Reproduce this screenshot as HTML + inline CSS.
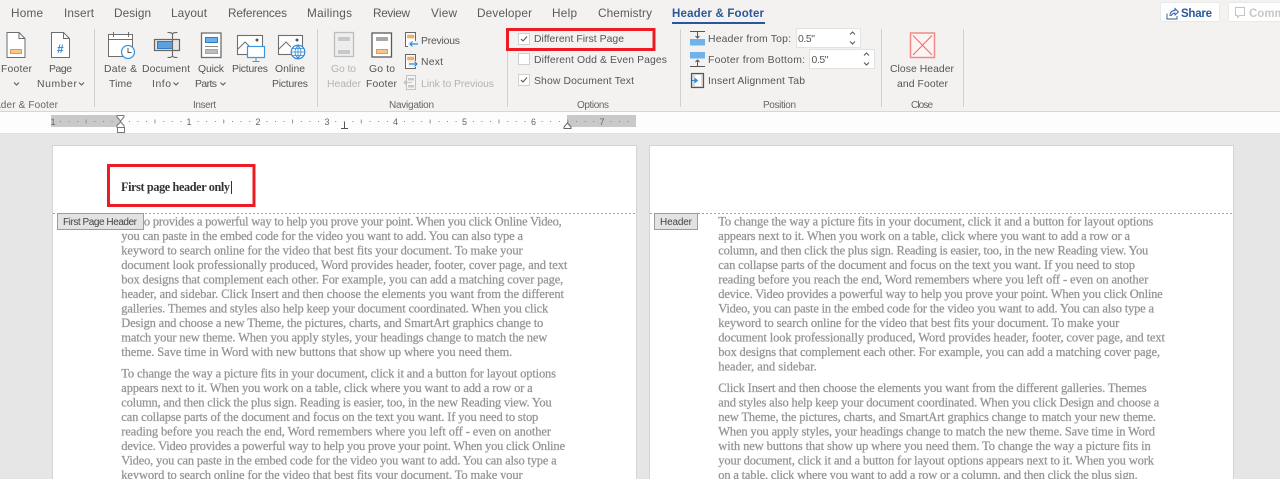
<!DOCTYPE html>
<html><head><meta charset="utf-8"><title>Word Header &amp; Footer</title>
<style>
html,body{margin:0;padding:0;background:#e6e6e6;overflow:hidden}
svg{display:block;position:absolute;left:0;top:0;filter:blur(.3px)}
text{font-family:"Liberation Sans",sans-serif;font-size:10.4px;fill:#555}
.t{font-size:11.8px;fill:#5a5a5a}
.g{fill:#b3b3b3}
.gl{fill:#666;font-size:10px}
.b{font-family:"Liberation Serif",serif;font-size:12.5px;fill:#949494;stroke:#949494;stroke-width:.25px}
.r{font-size:9px;fill:#666}
</style></head>
<body>
<svg width="1280" height="479" viewBox="0 0 1280 479" xmlns="http://www.w3.org/2000/svg">
<!-- backgrounds -->
<rect width="1280" height="479" fill="#e6e6e6"/>
<rect width="1280" height="111" fill="#f3f2f1"/>
<rect y="111" width="1280" height="1" fill="#d6d6d6"/>
<rect y="112" width="1280" height="21" fill="#fdfdfd"/>
<rect y="133" width="1280" height="1" fill="#e0e0e0"/>

<!-- tabs -->
<text class="t" x="11" y="17" textLength="32">Home</text>
<text class="t" x="64" y="17" textLength="30">Insert</text>
<text class="t" x="114" y="17" textLength="37">Design</text>
<text class="t" x="171" y="17" textLength="36">Layout</text>
<text class="t" x="228" y="17" textLength="59">References</text>
<text class="t" x="307" y="17" textLength="45">Mailings</text>
<text class="t" x="373" y="17" textLength="37">Review</text>
<text class="t" x="431" y="17" textLength="26">View</text>
<text class="t" x="477" y="17" textLength="55">Developer</text>
<text class="t" x="552" y="17" textLength="25">Help</text>
<text class="t" x="598" y="17" textLength="54">Chemistry</text>
<text class="t" x="672" y="17" textLength="92" style="fill:#2b579a;font-weight:bold;font-size:11.5px">Header &amp; Footer</text>
<rect x="672" y="22" width="93" height="2" fill="#2b579a"/>

<!-- share / comments -->
<rect x="1160.500" y="2.500" width="59" height="19" rx="2" fill="#fff" stroke="#e9e9e9"/>
<path d="M1167 13.500v5.500h10v-3M1170 16c0-4 2-5.500 5-5.500V8.500l3.500 3.500-3.500 3v-2c-2 0-3 1-4 3" fill="none" stroke="#2b579a" stroke-width=".9"/>
<text x="1181" y="17" textLength="31" style="font-size:11.5px;font-weight:bold;fill:#2b579a">Share</text>
<rect x="1228.500" y="2.500" width="60" height="19" rx="2" fill="#fff" stroke="#e9e9e9"/>
<path d="M1235.500 7.500h9v8h-5l-2 2v-2h-2z" fill="none" stroke="#c4c4c4"/>
<text x="1249" y="17" style="font-size:11.5px;font-weight:bold;fill:#c8c8c8">Comments</text>

<!-- separators -->
<g stroke="#d2d0ce">
<path d="M94.500 29v78M317.500 29v78M507.500 29v78M680.500 29v78M881.500 29v78M963.500 29v78"/>
</g>

<!-- Footer icon -->
<path d="M7 32.500h12l6 6v19H7z" fill="#fff" stroke="#6e6e6e"/>
<path d="M19 32.500v6h6" fill="none" stroke="#6e6e6e"/>
<rect x="10.500" y="49.500" width="11" height="4" fill="#f7c68c" stroke="#ea9a3c"/>
<text x="1" y="72" textLength="31">Footer</text>
<path d="M14 82.500l2.500 2.500 2.500-2.500" fill="none" stroke="#555"/>

<!-- Page Number icon -->
<path d="M51.500 32.500h12l6 6v19h-18z" fill="#fff" stroke="#6e6e6e"/>
<path d="M63.500 32.500v6h6" fill="none" stroke="#6e6e6e"/>
<text x="57" y="53" style="font-size:12px;font-weight:bold;fill:#2f86d6">#</text>
<text x="49" y="72" textLength="23">Page</text>
<text x="37" y="87" textLength="40">Number</text>
<path d="M79 82.500l2.500 2.500 2.500-2.500" fill="none" stroke="#555"/>

<text class="gl" x="-18" y="108" textLength="76">Header &amp; Footer</text>

<!-- Date & Time -->
<rect x="108.500" y="34.500" width="24" height="22" fill="#fff" stroke="#6e6e6e"/>
<path d="M108.500 39.500h24M113.500 32v5M128.500 32v5" fill="none" stroke="#6e6e6e"/>
<circle cx="128" cy="52" r="6.500" fill="#fff" stroke="#3d97e0" stroke-width="1.300"/>
<path d="M128 48v4.500h3.500" fill="none" stroke="#555"/>
<text x="104" y="72" textLength="33">Date &amp;</text>
<text x="109" y="87" textLength="23">Time</text>

<!-- Document Info -->
<rect x="154.500" y="39.500" width="25" height="11" fill="#e4e4e4" stroke="#666" stroke-width="1.200"/>
<rect x="157.500" y="41.500" width="15" height="7" fill="#5da0de" stroke="#2d7cc6"/>
<path d="M172.500 33v24M167.500 32.500c3 0 4 0 5 1.500 1-1.500 2-1.500 5-1.500M167.500 57.500c3 0 4 0 5-1.500 1 1.500 2 1.500 5 1.500" fill="none" stroke="#666" stroke-width="1.100"/>
<text x="142" y="72" textLength="48">Document</text>
<text x="152" y="87" textLength="19">Info</text>
<path d="M173.500 82.500l2.500 2.500 2.500-2.500" fill="none" stroke="#555"/>

<!-- Quick Parts -->
<rect x="201.500" y="33" width="19.500" height="24.500" fill="#fff" stroke="#6e6e6e" stroke-width="1.300"/>
<rect x="205.500" y="37.500" width="12" height="5" fill="#6ab0ee" stroke="#2d7cc6"/>
<path d="M205 46.500h13" stroke="#888"/>
<rect x="205.500" y="49.500" width="12" height="4" fill="#bcbcbc" stroke="#a8a8a8"/>
<text x="198" y="72" textLength="26">Quick</text>
<text x="195" y="87" textLength="22">Parts</text>
<path d="M220.500 82.500l2.500 2.500 2.500-2.500" fill="none" stroke="#555"/>

<!-- Pictures -->
<rect x="237.500" y="35.500" width="25" height="19" fill="#fff" stroke="#6e6e6e" stroke-width="1.100"/>
<path d="M238 49l7-7 5 5" fill="none" stroke="#6e6e6e"/>
<circle cx="257" cy="40" r="1.500" fill="#555"/>
<rect x="247.500" y="46.500" width="17" height="11" fill="#fff" stroke="#3d97e0" stroke-width="1.200"/>
<path d="M256 58v3M252.500 61.500h7" stroke="#3d97e0"/>
<text x="232" y="72" textLength="36">Pictures</text>

<!-- Online Pictures -->
<rect x="278.500" y="35.500" width="24" height="19" fill="#fff" stroke="#6e6e6e" stroke-width="1.100"/>
<path d="M279 49l7-7 5 5" fill="none" stroke="#6e6e6e"/>
<circle cx="297" cy="40" r="1.500" fill="#555"/>
<circle cx="298" cy="52" r="6.800" fill="#fff" stroke="#2d86d6" stroke-width="1.200"/>
<path d="M291.500 52h13M292.500 48.500h11M292.500 55.500h11M298 45.500v13M298 45.500c-4 4-4 9 0 13M298 45.500c4 4 4 9 0 13" fill="none" stroke="#2d86d6" stroke-width=".8"/>
<text x="275" y="72" textLength="30">Online</text>
<text x="272" y="87" textLength="36">Pictures</text>
<text class="gl" x="193" y="108" textLength="23">Insert</text>

<!-- Go to Header -->
<rect x="334.500" y="32.500" width="19" height="24" fill="#ededed" stroke="#bdbdbd" stroke-width="1.300"/>
<rect x="338" y="37" width="12" height="4" fill="#c8c8c8"/>
<rect x="338" y="50" width="12" height="4" fill="#c8c8c8"/>
<text class="g" x="331" y="72" textLength="25">Go to</text>
<text class="g" x="327" y="87" textLength="34">Header</text>

<!-- Go to Footer -->
<rect x="372" y="33" width="19.500" height="24" fill="#fff" stroke="#5a5a5a" stroke-width="1.300"/>
<rect x="376" y="37" width="12" height="4" fill="#a8a8a8"/>
<rect x="376.500" y="49.500" width="11" height="4" fill="#f7c68c" stroke="#ea9a3c"/>
<text x="369" y="72" textLength="26">Go to</text>
<text x="366" y="87" textLength="31">Footer</text>

<!-- Previous -->
<rect x="405.500" y="32.500" width="10" height="14" fill="#fff" stroke="#666"/>
<rect x="407.500" y="35" width="6.500" height="3" fill="#f5b26b" stroke="#ea9a3c" stroke-width=".5"/>
<rect x="408" y="41" width="10" height="6" fill="#f3f2f1"/>
<path d="M418 44h-8M412.500 41.500L410 44l2.500 2.500" fill="none" stroke="#2d8ddd" stroke-width="1.200"/>
<!-- Next -->
<rect x="405.500" y="54.500" width="10" height="14" fill="#fff" stroke="#666"/>
<rect x="407.500" y="57" width="6.500" height="3" fill="#f5b26b" stroke="#ea9a3c" stroke-width=".5"/>
<rect x="408" y="61" width="10" height="6" fill="#f3f2f1"/>
<path d="M409 64h8M414.500 61.500L417 64l-2.500 2.500" fill="none" stroke="#2d8ddd" stroke-width="1.200"/>
<!-- Link -->
<rect x="406.500" y="75.500" width="9" height="14" fill="#f5f5f5" stroke="#c2c2c2"/>
<rect x="408" y="78" width="6" height="2.500" fill="#c8c8c8"/>
<rect x="408" y="85" width="6" height="2.500" fill="#c8c8c8"/>
<path d="M412 82.500h-8M406.500 80L404 82.500l2.500 2.500" fill="none" stroke="#c2c2c2"/>
<text x="421" y="44" textLength="39">Previous</text>
<text x="421" y="65" textLength="22">Next</text>
<text class="g" x="421" y="87" textLength="73">Link to Previous</text>
<text class="gl" x="389" y="108" textLength="45">Navigation</text>

<!-- Options -->
<rect x="518.500" y="33.500" width="11" height="11" fill="#fff" stroke="#d0d0d0"/>
<path d="M521 39l2 2 4-4.500" fill="none" stroke="#555" stroke-width="1.100"/>
<rect x="518.500" y="53.500" width="11" height="11" fill="#fff" stroke="#d0d0d0"/>
<rect x="518.500" y="74.500" width="11" height="11" fill="#fff" stroke="#d0d0d0"/>
<path d="M521 80l2 2 4-4.500" fill="none" stroke="#555" stroke-width="1.100"/>
<text x="534" y="42" textLength="90">Different First Page</text>
<text x="534" y="63" textLength="133">Different Odd &amp; Even Pages</text>
<text x="534" y="84" textLength="100">Show Document Text</text>
<text class="gl" x="577" y="108" textLength="32">Options</text>
<rect x="507.500" y="29.500" width="146.500" height="20" fill="none" stroke="#ed1c24" stroke-width="3"/>

<!-- Position -->
<path d="M690 31.500h15M697.500 32v6M695.500 36l2 2 2-2" fill="none" stroke="#555"/>
<rect x="690" y="39" width="15" height="6.500" fill="#6fb3ea"/>
<rect x="690" y="52" width="15" height="6.500" fill="#6fb3ea"/>
<path d="M690 66.500h15M697.500 60v6M695.500 62l2-2 2 2" fill="none" stroke="#555"/>
<rect x="691.500" y="73.500" width="12" height="14" fill="#dcdcdc" stroke="#555" stroke-width="1.200"/>
<rect x="695" y="75" width="6" height="11" fill="#fff"/>
<path d="M692 80.500h5M695 78.500l2.500 2-2.500 2z" fill="#2d8ddd" stroke="#2d8ddd"/>
<text x="708" y="42" textLength="83">Header from Top:</text>
<text x="708" y="63" textLength="97">Footer from Bottom:</text>
<text x="708" y="84" textLength="97">Insert Alignment Tab</text>
<rect x="796.500" y="28.500" width="64" height="19" fill="#fff" stroke="#e2e2e2"/>
<rect x="809.500" y="49.500" width="65" height="19" fill="#fff" stroke="#e2e2e2"/>
<text x="798" y="42" textLength="17">0.5"</text>
<text x="811.500" y="63" textLength="17">0.5"</text>
<path d="M850 34.500l2.500-2.500 2.500 2.500M850 41.500l2.500 2.500 2.500-2.500M864 55.500l2.500-2.500 2.500 2.500M864 62.500l2.500 2.500 2.500-2.500" fill="none" stroke="#555"/>
<text class="gl" x="763" y="108" textLength="33">Position</text>

<!-- Close -->
<rect x="910.500" y="33" width="24" height="24.500" fill="#fdf3f3" stroke="#f08a8a" stroke-width="1.500"/>
<path d="M913 35.500l19 19.500M932 35.500l-19 19.500" stroke="#ee6a6a" stroke-width="1"/>
<text x="890" y="72" textLength="64">Close Header</text>
<text x="897" y="87" textLength="51">and Footer</text>
<text class="gl" x="911" y="108" textLength="22">Close</text>

<!-- ruler -->
<rect x="51" y="115" width="69" height="12" fill="#c9c9c9"/>
<rect x="567" y="115" width="69" height="12" fill="#c9c9c9"/>
<path d="M60 121.500H636" stroke="#888" stroke-dasharray="1 7.600"/>
<path d="M85.600 121.500H636" stroke="#999" stroke-width="4" stroke-dasharray="1 67.800"/>
<rect x="185" y="115" width="8" height="12" fill="#fdfdfd"/>
<rect x="254" y="115" width="8" height="12" fill="#fdfdfd"/>
<rect x="323" y="115" width="8" height="12" fill="#fdfdfd"/>
<rect x="392" y="115" width="8" height="12" fill="#fdfdfd"/>
<rect x="461" y="115" width="8" height="12" fill="#fdfdfd"/>
<rect x="529" y="115" width="8" height="12" fill="#fdfdfd"/>
<rect x="598" y="115" width="8" height="12" fill="#c9c9c9"/>
<text class="r" x="50.500" y="125">1</text>
<text class="r" x="186.500" y="125">1</text>
<text class="r" x="255.500" y="125">2</text>
<text class="r" x="324.500" y="125">3</text>
<text class="r" x="393" y="125">4</text>
<text class="r" x="462" y="125">5</text>
<text class="r" x="531" y="125">6</text>
<text class="r" x="599.500" y="125">7</text>
<path d="M117 115.500h7v1.500l-3.500 4-3.500-4z" fill="#fff" stroke="#777"/>
<path d="M120.500 122l3.500 3.500v2h-7v-2z" fill="#fff" stroke="#777"/>
<rect x="117.500" y="127.500" width="7" height="5" fill="#fff" stroke="#777"/>
<path d="M344.500 122v6M341 128.500h7" stroke="#555" fill="none"/>
<path d="M567.500 123l3.500 4v1.500h-7V127z" fill="#fff" stroke="#666"/>

<!-- pages -->
<rect x="52.500" y="145.500" width="584" height="340" fill="#fff" stroke="#d4d4d4"/>
<rect x="649.500" y="145.500" width="584" height="340" fill="#fff" stroke="#d4d4d4"/>
<path d="M53 213.500H636M650 213.500H1233" stroke="#a0a0a0" stroke-dasharray="2 2"/>

<!-- red box and header text -->
<rect x="108.500" y="165.500" width="145.500" height="40" fill="none" stroke="#ed1c24" stroke-width="3"/>
<text x="121" y="191" textLength="109" style="font-family:'Liberation Serif',serif;font-size:12.200px;font-weight:bold;fill:#333">First page header only</text>
<path d="M231.500 181v13" stroke="#333"/>

<!-- left page body -->
<text class="b" x="121.300" y="225.500" textLength="440.400">Video provides a powerful way to help you prove your point. When you click Online Video,</text>
<text class="b" x="121.300" y="240" textLength="401.700">you can paste in the embed code for the video you want to add. You can also type a</text>
<text class="b" x="121.300" y="254.500" textLength="401.400">keyword to search online for the video that best fits your document. To make your</text>
<text class="b" x="121.300" y="268.900" textLength="446">document look professionally produced, Word provides header, footer, cover page, and text</text>
<text class="b" x="121.300" y="283.400" textLength="442">box designs that complement each other. For example, you can add a matching cover page,</text>
<text class="b" x="121.300" y="297.900" textLength="442.700">header, and sidebar. Click Insert and then choose the elements you want from the different</text>
<text class="b" x="121.300" y="312.400" textLength="427">galleries. Themes and styles also help keep your document coordinated. When you click</text>
<text class="b" x="121.300" y="326.900" textLength="422">Design and choose a new Theme, the pictures, charts, and SmartArt graphics change to</text>
<text class="b" x="121.300" y="341.300" textLength="426">match your new theme. When you apply styles, your headings change to match the new</text>
<text class="b" x="121.300" y="355.800" textLength="391">theme. Save time in Word with new buttons that show up where you need them.</text>

<text class="b" x="121.300" y="377.700" textLength="434.700">To change the way a picture fits in your document, click it and a button for layout options</text>
<text class="b" x="121.300" y="392.200" textLength="411.400">appears next to it. When you work on a table, click where you want to add a row or a</text>
<text class="b" x="121.300" y="406.700" textLength="430.400">column, and then click the plus sign. Reading is easier, too, in the new Reading view. You</text>
<text class="b" x="121.300" y="421.100" textLength="417">can collapse parts of the document and focus on the text you want. If you need to stop</text>
<text class="b" x="121.300" y="435.600" textLength="429.700">reading before you reach the end, Word remembers where you left off - even on another</text>
<text class="b" x="121.300" y="450.100" textLength="443.700">device. Video provides a powerful way to help you prove your point. When you click Online</text>
<text class="b" x="121.300" y="464.600" textLength="435.400">Video, you can paste in the embed code for the video you want to add. You can also type a</text>
<text class="b" x="121.300" y="479" textLength="401.400">keyword to search online for the video that best fits your document. To make your</text>

<!-- right page body -->
<text class="b" x="718.300" y="225.500" textLength="435">To change the way a picture fits in your document, click it and a button for layout options</text>
<text class="b" x="718.300" y="240" textLength="411.700">appears next to it. When you work on a table, click where you want to add a row or a</text>
<text class="b" x="718.300" y="254.500" textLength="430">column, and then click the plus sign. Reading is easier, too, in the new Reading view. You</text>
<text class="b" x="718.300" y="268.900" textLength="416.700">can collapse parts of the document and focus on the text you want. If you need to stop</text>
<text class="b" x="718.300" y="283.400" textLength="430">reading before you reach the end, Word remembers where you left off - even on another</text>
<text class="b" x="718.300" y="297.900" textLength="444.400">device. Video provides a powerful way to help you prove your point. When you click Online</text>
<text class="b" x="718.300" y="312.400" textLength="435.700">Video, you can paste in the embed code for the video you want to add. You can also type a</text>
<text class="b" x="718.300" y="326.900" textLength="401">keyword to search online for the video that best fits your document. To make your</text>
<text class="b" x="718.300" y="341.300" textLength="446.700">document look professionally produced, Word provides header, footer, cover page, and text</text>
<text class="b" x="718.300" y="355.800" textLength="441.700">box designs that complement each other. For example, you can add a matching cover page,</text>
<text class="b" x="718.300" y="370.300" textLength="98.400">header, and sidebar.</text>

<text class="b" x="718.300" y="392.200" textLength="428.400">Click Insert and then choose the elements you want from the different galleries. Themes</text>
<text class="b" x="718.300" y="406.700" textLength="441">and styles also help keep your document coordinated. When you click Design and choose a</text>
<text class="b" x="718.300" y="421.100" textLength="437.700">new Theme, the pictures, charts, and SmartArt graphics change to match your new theme.</text>
<text class="b" x="718.300" y="435.600" textLength="436.700">When you apply styles, your headings change to match the new theme. Save time in Word</text>
<text class="b" x="718.300" y="450.100" textLength="432.400">with new buttons that show up where you need them. To change the way a picture fits in</text>
<text class="b" x="718.300" y="464.600" textLength="435.700">your document, click it and a button for layout options appears next to it. When you work</text>
<text class="b" x="718.300" y="479" textLength="419.400">on a table, click where you want to add a row or a column, and then click the plus sign.</text>

<!-- header labels -->
<rect x="57.500" y="213.500" width="86" height="16" fill="#e3e3e3" stroke="#9c9c9c"/>
<text x="63" y="225" textLength="74" style="font-size:10px;fill:#444">First Page Header</text>
<rect x="654.500" y="213.500" width="43" height="16" fill="#e3e3e3" stroke="#9c9c9c"/>
<text x="660" y="225" textLength="32" style="font-size:10px;fill:#444">Header</text>
</svg>
</body></html>
